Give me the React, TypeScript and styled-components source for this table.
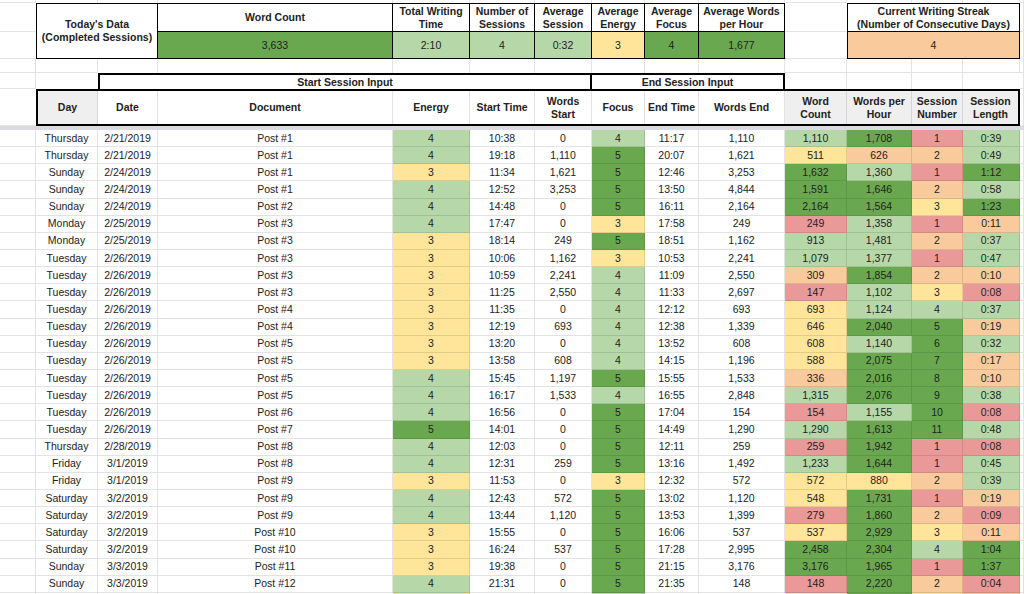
import React from 'react';
import styled, { createGlobalStyle } from 'styled-components';

const GRID = 'rgba(0,0,0,0.11)';
const INK = '#222';
const COLS = '36px 62px 60px 235px 77px 65px 57px 53px 54px 86px 62px 65px 51px 57px 4px';
const HEAD_COLS = '60px 60px 235px 77px 65px 57px 53px 54px 86px 62px 65px 51px 55px';

type Tone = 'dg' | 'lg' | 'y' | 'o' | 'r';
const TONES: Record<Tone, string> = {
  dg: '#6aa84f',
  lg: '#b6d7a8',
  y: '#ffe599',
  o: '#f9cb9c',
  r: '#ea9999',
};

const Global = createGlobalStyle`
  html, body { margin: 0; padding: 0; background: #fff; }
  body { font-family: 'Liberation Sans', Arial, sans-serif; }
`;

const Page = styled.div`
  width: 1024px;
  height: 594px;
  overflow: hidden;
  background: #fff;
  font-family: 'Liberation Sans', Arial, sans-serif;
  font-size: 10.5px;
  color: ${INK};
`;

const Band = styled.div<{ $rows: string }>`
  display: grid;
  grid-template-columns: ${COLS};
  grid-template-rows: ${(p) => p.$rows};
`;

const Cell = styled.div`
  box-sizing: border-box;
  min-width: 0;
  display: flex;
  align-items: center;
  justify-content: center;
  text-align: center;
  line-height: 13px;
  white-space: nowrap;
  overflow: hidden;
  border-right: 1px solid ${GRID};
  border-bottom: 1px solid ${GRID};
`;

const Blank = styled(Cell)<{ $noRight?: boolean; $noBottom?: boolean }>`
  ${(p) => (p.$noRight ? 'border-right: none;' : '')}
  ${(p) => (p.$noBottom ? 'border-bottom: none;' : '')}
`;

const TodayLabel = styled(Cell)`
  grid-column: span 2;
  grid-row: span 2;
  font-weight: bold;
  border: 1px solid #000;
`;

const StatHead = styled(Cell)<{ $span?: number; $open?: boolean }>`
  grid-column: span ${(p) => p.$span ?? 1};
  font-weight: bold;
  border-top: 1px solid #000;
  border-right: 1px solid #000;
  border-bottom: 1px solid #000;
  ${(p) => (p.$open ? 'border-left: 1px solid #000;' : '')}
`;

const StatValue = styled(Cell)<{ $tone: Tone; $span?: number; $open?: boolean }>`
  grid-column: span ${(p) => p.$span ?? 1};
  background: ${(p) => TONES[p.$tone]};
  border-right: 1px solid #000;
  border-bottom: 1px solid #000;
  ${(p) => (p.$open ? 'border-left: 1px solid #000;' : '')}
`;

const SectionBox = styled.div<{ $span: number; $first?: boolean }>`
  grid-column: span ${(p) => p.$span};
  box-sizing: border-box;
  border: 2px solid #000;
  border-bottom: none;
  ${(p) => (p.$first ? '' : 'border-left: none;')}
  display: flex;
  align-items: center;
  justify-content: center;
  font-weight: bold;
  line-height: 12px;
`;

const HeaderBand = styled.div`
  grid-column: span 13;
  box-sizing: border-box;
  display: grid;
  grid-template-columns: ${HEAD_COLS};
  border: 2px solid #000;
`;

const HeadCell = styled(Cell)<{ $shade?: boolean }>`
  font-weight: bold;
  border-bottom: none;
  background: ${(p) => (p.$shade ? '#efefef' : '#fff')};
  &:last-child {
    border-right: none;
  }
`;

const FreezeBar = styled.div`
  height: 4px;
  background: #d9dbe0;
`;

const DataGrid = styled.div`
  display: grid;
  grid-template-columns: ${COLS};
  grid-auto-rows: 17.15px;
`;

const DataCell = styled(Cell)<{ $tone?: Tone }>`
  background: ${(p) => (p.$tone ? TONES[p.$tone] : 'transparent')};
`;

type Row = [
  string, string, string,
  string, Tone, string, string,
  string, Tone, string, string,
  string, Tone, string, Tone, string, Tone, string, Tone,
];

const ROWS: Row[] = [
  ['Thursday', '2/21/2019', 'Post #1', '4', 'lg', '10:38', '0', '4', 'lg', '11:17', '1,110', '1,110', 'lg', '1,708', 'dg', '1', 'r', '0:39', 'lg'],
  ['Thursday', '2/21/2019', 'Post #1', '4', 'lg', '19:18', '1,110', '5', 'dg', '20:07', '1,621', '511', 'y', '626', 'o', '2', 'o', '0:49', 'lg'],
  ['Sunday', '2/24/2019', 'Post #1', '3', 'y', '11:34', '1,621', '5', 'dg', '12:46', '3,253', '1,632', 'dg', '1,360', 'lg', '1', 'r', '1:12', 'dg'],
  ['Sunday', '2/24/2019', 'Post #1', '4', 'lg', '12:52', '3,253', '5', 'dg', '13:50', '4,844', '1,591', 'dg', '1,646', 'dg', '2', 'o', '0:58', 'lg'],
  ['Sunday', '2/24/2019', 'Post #2', '4', 'lg', '14:48', '0', '5', 'dg', '16:11', '2,164', '2,164', 'dg', '1,564', 'dg', '3', 'y', '1:23', 'dg'],
  ['Monday', '2/25/2019', 'Post #3', '4', 'lg', '17:47', '0', '3', 'y', '17:58', '249', '249', 'r', '1,358', 'lg', '1', 'r', '0:11', 'o'],
  ['Monday', '2/25/2019', 'Post #3', '3', 'y', '18:14', '249', '5', 'dg', '18:51', '1,162', '913', 'lg', '1,481', 'lg', '2', 'o', '0:37', 'lg'],
  ['Tuesday', '2/26/2019', 'Post #3', '3', 'y', '10:06', '1,162', '3', 'y', '10:53', '2,241', '1,079', 'lg', '1,377', 'lg', '1', 'r', '0:47', 'lg'],
  ['Tuesday', '2/26/2019', 'Post #3', '3', 'y', '10:59', '2,241', '4', 'lg', '11:09', '2,550', '309', 'o', '1,854', 'dg', '2', 'o', '0:10', 'o'],
  ['Tuesday', '2/26/2019', 'Post #3', '3', 'y', '11:25', '2,550', '4', 'lg', '11:33', '2,697', '147', 'r', '1,102', 'lg', '3', 'y', '0:08', 'r'],
  ['Tuesday', '2/26/2019', 'Post #4', '3', 'y', '11:35', '0', '4', 'lg', '12:12', '693', '693', 'y', '1,124', 'lg', '4', 'lg', '0:37', 'lg'],
  ['Tuesday', '2/26/2019', 'Post #4', '3', 'y', '12:19', '693', '4', 'lg', '12:38', '1,339', '646', 'y', '2,040', 'dg', '5', 'dg', '0:19', 'o'],
  ['Tuesday', '2/26/2019', 'Post #5', '3', 'y', '13:20', '0', '4', 'lg', '13:52', '608', '608', 'y', '1,140', 'lg', '6', 'dg', '0:32', 'lg'],
  ['Tuesday', '2/26/2019', 'Post #5', '3', 'y', '13:58', '608', '4', 'lg', '14:15', '1,196', '588', 'y', '2,075', 'dg', '7', 'dg', '0:17', 'o'],
  ['Tuesday', '2/26/2019', 'Post #5', '4', 'lg', '15:45', '1,197', '5', 'dg', '15:55', '1,533', '336', 'o', '2,016', 'dg', '8', 'dg', '0:10', 'o'],
  ['Tuesday', '2/26/2019', 'Post #5', '4', 'lg', '16:17', '1,533', '4', 'lg', '16:55', '2,848', '1,315', 'lg', '2,076', 'dg', '9', 'dg', '0:38', 'lg'],
  ['Tuesday', '2/26/2019', 'Post #6', '4', 'lg', '16:56', '0', '5', 'dg', '17:04', '154', '154', 'r', '1,155', 'lg', '10', 'dg', '0:08', 'r'],
  ['Tuesday', '2/26/2019', 'Post #7', '5', 'dg', '14:01', '0', '5', 'dg', '14:49', '1,290', '1,290', 'lg', '1,613', 'dg', '11', 'dg', '0:48', 'lg'],
  ['Thursday', '2/28/2019', 'Post #8', '4', 'lg', '12:03', '0', '5', 'dg', '12:11', '259', '259', 'r', '1,942', 'dg', '1', 'r', '0:08', 'r'],
  ['Friday', '3/1/2019', 'Post #8', '4', 'lg', '12:31', '259', '5', 'dg', '13:16', '1,492', '1,233', 'lg', '1,644', 'dg', '1', 'r', '0:45', 'lg'],
  ['Friday', '3/1/2019', 'Post #9', '3', 'y', '11:53', '0', '3', 'y', '12:32', '572', '572', 'y', '880', 'y', '2', 'o', '0:39', 'lg'],
  ['Saturday', '3/2/2019', 'Post #9', '4', 'lg', '12:43', '572', '5', 'dg', '13:02', '1,120', '548', 'y', '1,731', 'dg', '1', 'r', '0:19', 'o'],
  ['Saturday', '3/2/2019', 'Post #9', '4', 'lg', '13:44', '1,120', '5', 'dg', '13:53', '1,399', '279', 'r', '1,860', 'dg', '2', 'o', '0:09', 'r'],
  ['Saturday', '3/2/2019', 'Post #10', '3', 'y', '15:55', '0', '5', 'dg', '16:06', '537', '537', 'y', '2,929', 'dg', '3', 'y', '0:11', 'o'],
  ['Saturday', '3/2/2019', 'Post #10', '3', 'y', '16:24', '537', '5', 'dg', '17:28', '2,995', '2,458', 'dg', '2,304', 'dg', '4', 'lg', '1:04', 'dg'],
  ['Sunday', '3/3/2019', 'Post #11', '3', 'y', '19:38', '0', '5', 'dg', '21:15', '3,176', '3,176', 'dg', '1,965', 'dg', '1', 'r', '1:37', 'dg'],
  ['Sunday', '3/3/2019', 'Post #12', '4', 'lg', '21:31', '0', '5', 'dg', '21:35', '148', '148', 'r', '2,220', 'dg', '2', 'o', '0:04', 'r'],
];

/* the next row of the sheet peeks in at the bottom edge: only its fills show */
const PEEK: (Tone | undefined)[] = [
  undefined, undefined, undefined, undefined, 'y', undefined, undefined, 'lg',
  undefined, undefined, 'y', 'dg', 'y', 'o', undefined,
];

const STATS: { head: React.ReactNode; value: string; tone: Tone }[] = [
  { head: 'Word Count', value: '3,633', tone: 'dg' },
  { head: <>Total Writing<br />Time</>, value: '2:10', tone: 'lg' },
  { head: <>Number of<br />Sessions</>, value: '4', tone: 'lg' },
  { head: <>Average<br />Session</>, value: '0:32', tone: 'lg' },
  { head: <>Average<br />Energy</>, value: '3', tone: 'y' },
  { head: <>Average<br />Focus</>, value: '4', tone: 'dg' },
  { head: <>Average Words<br />per Hour</>, value: '1,677', tone: 'dg' },
];

const HEADS: { label: React.ReactNode; shade?: boolean }[] = [
  { label: 'Day', shade: true },
  { label: 'Date' },
  { label: 'Document' },
  { label: 'Energy' },
  { label: 'Start Time' },
  { label: <>Words<br />Start</> },
  { label: 'Focus' },
  { label: 'End Time' },
  { label: 'Words End' },
  { label: <>Word<br />Count</>, shade: true },
  { label: <>Words per<br />Hour</>, shade: true },
  { label: <>Session<br />Number</>, shade: true },
  { label: <>Session<br />Length</>, shade: true },
];

const range = (n: number) => Array.from({ length: n }, (_, i) => i);

export default function App() {
  return (
    <Page>
      <Global />

      <Band $rows="3px">
        {range(15).map((i) => (
          <Blank key={i} $noBottom={(i >= 1 && i <= 9) || (i >= 11 && i <= 13)} />
        ))}
      </Band>

      <Band $rows="29px 27px">
        <Blank $noRight />
        <TodayLabel>
          Today's Data
          <br />
          (Completed Sessions)
        </TodayLabel>
        {STATS.map((s, i) => (
          <StatHead key={i}>
            <span>{s.head}</span>
          </StatHead>
        ))}
        <Blank $noRight />
        <StatHead $span={3} $open>
          <span>
            Current Writing Streak
            <br />
            (Number of Consecutive Days)
          </span>
        </StatHead>
        <Blank />
        <Blank $noRight />
        {STATS.map((s, i) => (
          <StatValue key={i} $tone={s.tone}>
            {s.value}
          </StatValue>
        ))}
        <Blank $noRight />
        <StatValue $tone="o" $span={3} $open>
          4
        </StatValue>
        <Blank />
      </Band>

      <Band $rows="14px">
        {range(15).map((i) => (
          <Blank key={i} $noBottom={i >= 2 && i <= 9} />
        ))}
      </Band>

      <Band $rows="16px">
        <Blank />
        <Blank $noRight $noBottom />
        <SectionBox $span={5} $first>
          Start Session Input
        </SectionBox>
        <SectionBox $span={3}>End Session Input</SectionBox>
        <Blank $noBottom />
        <Blank $noBottom />
        <Blank $noBottom />
        <Blank $noBottom $noRight />
        <Blank />
      </Band>

      <Band $rows="37px">
        <Blank $noRight />
        <HeaderBand>
          {HEADS.map((h, i) => (
            <HeadCell key={i} $shade={h.shade}>
              <span>{h.label}</span>
            </HeadCell>
          ))}
        </HeaderBand>
        <Blank />
      </Band>

      <FreezeBar />

      <DataGrid>
        {ROWS.map((r, i) => (
          <React.Fragment key={i}>
            <DataCell />
            <DataCell>{r[0]}</DataCell>
            <DataCell>{r[1]}</DataCell>
            <DataCell>{r[2]}</DataCell>
            <DataCell $tone={r[4]}>{r[3]}</DataCell>
            <DataCell>{r[5]}</DataCell>
            <DataCell>{r[6]}</DataCell>
            <DataCell $tone={r[8]}>{r[7]}</DataCell>
            <DataCell>{r[9]}</DataCell>
            <DataCell>{r[10]}</DataCell>
            <DataCell $tone={r[12]}>{r[11]}</DataCell>
            <DataCell $tone={r[14]}>{r[13]}</DataCell>
            <DataCell $tone={r[16]}>{r[15]}</DataCell>
            <DataCell $tone={r[18]}>{r[17]}</DataCell>
            <DataCell />
          </React.Fragment>
        ))}
        {PEEK.map((t, i) => (
          <DataCell key={`peek-${i}`} $tone={t} />
        ))}
      </DataGrid>
    </Page>
  );
}
